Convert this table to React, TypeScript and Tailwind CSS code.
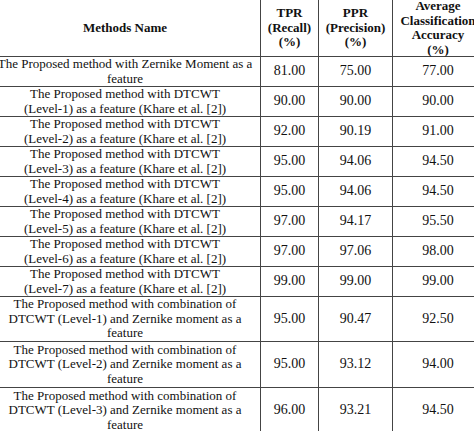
import React from "react";

const rows: { name: string[]; tpr: string; ppr: string; acc: string; h: string }[] = [
  { name: ["The Proposed method with Zernike Moment as a", "feature"], tpr: "81.00", ppr: "75.00", acc: "77.00", h: "h-[30px]" },
  { name: ["The Proposed method with DTCWT", "(Level-1) as a feature (Khare et al. [2])"], tpr: "90.00", ppr: "90.00", acc: "90.00", h: "h-[30px]" },
  { name: ["The Proposed method with DTCWT", "(Level-2) as a feature (Khare et al. [2])"], tpr: "92.00", ppr: "90.19", acc: "91.00", h: "h-[30px]" },
  { name: ["The Proposed method with DTCWT", "(Level-3) as a feature (Khare et al. [2])"], tpr: "95.00", ppr: "94.06", acc: "94.50", h: "h-[30px]" },
  { name: ["The Proposed method with DTCWT", "(Level-4) as a feature (Khare et al. [2])"], tpr: "95.00", ppr: "94.06", acc: "94.50", h: "h-[30px]" },
  { name: ["The Proposed method with DTCWT", "(Level-5) as a feature (Khare et al. [2])"], tpr: "97.00", ppr: "94.17", acc: "95.50", h: "h-[30px]" },
  { name: ["The Proposed method with DTCWT", "(Level-6) as a feature (Khare et al. [2])"], tpr: "97.00", ppr: "97.06", acc: "98.00", h: "h-[30px]" },
  { name: ["The Proposed method with DTCWT", "(Level-7) as a feature (Khare et al. [2])"], tpr: "99.00", ppr: "99.00", acc: "99.00", h: "h-[30px]" },
  { name: ["The Proposed method with combination of", "DTCWT (Level-1) and Zernike moment as a", "feature"], tpr: "95.00", ppr: "90.47", acc: "92.50", h: "h-[45px]" },
  { name: ["The Proposed method with combination of", "DTCWT (Level-2) and Zernike moment as a", "feature"], tpr: "95.00", ppr: "93.12", acc: "94.00", h: "h-[46px]" },
  { name: ["The Proposed method with combination of", "DTCWT (Level-3) and Zernike moment as a", "feature"], tpr: "96.00", ppr: "93.21", acc: "94.50", h: "h-[46px]" },
];

const cell = "flex flex-col items-center justify-center text-center border-r border-b border-[#444] whitespace-nowrap";

export default function App() {
  return (
    <div className="w-[474px] h-[431px] overflow-hidden bg-white text-[#111]" style={{ fontFamily: '"Liberation Serif", "Times New Roman", serif' }}>
      <div className="-ml-[10px] grid grid-cols-[271px_58px_74px_91px] text-[13px] leading-[14.5px]">
        <div className={`${cell} h-[57px] font-bold`}>Methods Name</div>
        <div className={`${cell} h-[57px] font-bold`}>
          <span>TPR</span>
          <span>(Recall)</span>
          <span>(%)</span>
        </div>
        <div className={`${cell} h-[57px] font-bold`}>
          <span>PPR</span>
          <span>(Precision)</span>
          <span>(%)</span>
        </div>
        <div className={`${cell} h-[57px] font-bold`}>
          <span>Average</span>
          <span>Classification</span>
          <span>Accuracy</span>
          <span>(%)</span>
        </div>
        {rows.map((r, i) => (
          <React.Fragment key={i}>
            <div className={`${cell} ${r.h}`}>
              {r.name.map((l, j) => (
                <span key={j}>{l}</span>
              ))}
            </div>
            <div className={`${cell} ${r.h} text-[14px]`}>{r.tpr}</div>
            <div className={`${cell} ${r.h} text-[14px]`}>{r.ppr}</div>
            <div className={`${cell} ${r.h} text-[14px]`}>{r.acc}</div>
          </React.Fragment>
        ))}
      </div>
    </div>
  );
}
